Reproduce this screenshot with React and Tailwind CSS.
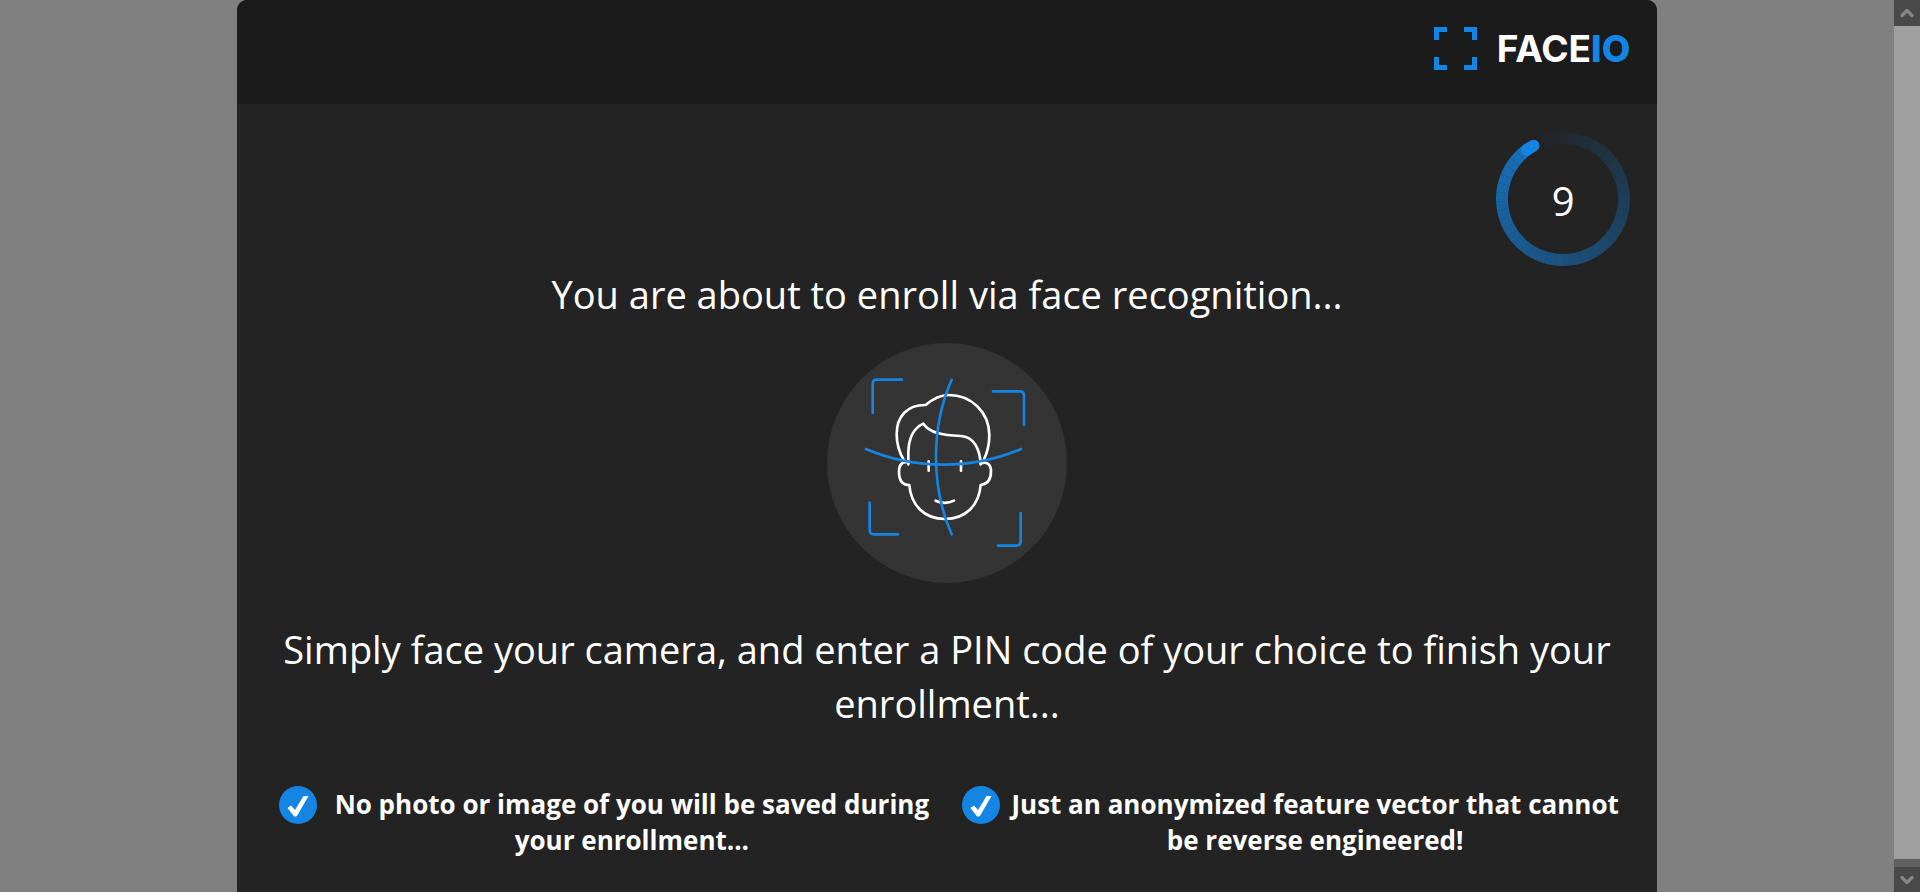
import React from "react";
import { ChevronUp, ChevronDown } from "lucide-react";

const SEGMENTS = 44;
const SWEEP = 352;
const START = -28;

const point = (angle, r = 61) => {
  const rad = ((angle - 90) * Math.PI) / 180;
  return `${(67 + r * Math.cos(rad)).toFixed(2)} ${(67 + r * Math.sin(rad)).toFixed(2)}`;
};

const arc = (from, to) => `M${point(from)} A61 61 0 0 1 ${point(to)}`;

const notes = [
  "No photo or image of you will be saved during your enrollment...",
  "Just an anonymized feature vector that cannot be reverse engineered!",
];

function Logo() {
  return (
    <a href="#" className="flex items-center gap-5">
      <svg className="h-[43px] w-[43px]" viewBox="0 0 43 43" fill="none" stroke="#1485e3" strokeWidth="5">
        <path d="M13 2.500H2.500V13M30 2.500H40.500V13M2.500 30V40.500H13M40.500 30V40.500H30" />
      </svg>
      <span className="font-['Inter'] text-[37px] leading-[43px] font-bold text-white">
        FACE<span className="font-extrabold text-[#1485e3]">IO</span>
      </span>
    </a>
  );
}

function Countdown({ value }) {
  const step = SWEEP / SEGMENTS;

  return (
    <div className="relative flex h-[134px] w-[134px] items-center justify-center">
      <svg className="absolute inset-0" viewBox="0 0 134 134" fill="none" stroke="#1485e3" strokeWidth="12">
        {Array.from({ length: SEGMENTS }, (_, i) => (
          <path
            key={i}
            d={arc(START + i * step, START + (i + 1) * step)}
            strokeOpacity={(0.8 * (i + 0.5)) / SEGMENTS}
          />
        ))}
        <path d={arc(-36, -29)} strokeLinecap="round" />
      </svg>
      <span className="relative pt-1 text-[40px] leading-[54px]">{value}</span>
    </div>
  );
}

function FaceScan() {
  return (
    <svg
      className="h-60 w-60"
      viewBox="21 24 720 720"
      fill="none"
      strokeWidth="8"
      strokeLinecap="round"
      strokeLinejoin="round"
    >
      <circle cx="381" cy="384" r="360" fill="#343434" />
      <g stroke="#ffffff">
        <path d="M252 376C236 350 230 322 230 298C230 244 262 209 317 210C338 192 362 180 386 180C454 180 508 232 508 301C508 330 501 356 490 378" />
        <path d="M265 388V352C266 308 280 280 310 266C330 294 366 301 422 303C462 305 480 342 482 388" />
        <path d="M265 382C246 378 237 390 237 410C237 436 248 450 268 450C273 510 312 552 375 552C438 552 477 510 482 450C503 448 513 436 513 409C513 388 500 378 482 386" />
        <path d="M326 379V407M423 379V407" />
        <path d="M347 497Q375 510 402 497" />
      </g>
      <g stroke="#1485e3">
        <path d="M158 234V147Q158 134 171 134H246" />
        <path d="M519 169H600Q612 169 612 182V270" />
        <path d="M149 503V585Q149 598 162 598H234" />
        <path d="M602 534V619Q602 632 590 632H534" />
        <path d="M138 342Q248 389 370 389Q492 389 603 342" />
        <path d="M395 134Q348 240 348 366Q348 492 395 598" />
      </g>
    </svg>
  );
}

function Note({ text }) {
  return (
    <li className="flex flex-1 items-start pl-[15px]">
      <svg className="h-[38px] w-[38px] shrink-0" viewBox="0 0 38 38">
        <circle cx="19" cy="19" r="19" fill="#1485e3" />
        <path d="M8.500 22L12 19.500L16 24L24.500 10H29.500L18.500 29C17.500 31 15 31.200 14 29Z" fill="#ffffff" />
      </svg>
      <p className="flex-1 px-2 text-center text-[26px] leading-9 font-bold">{text}</p>
    </li>
  );
}

function Scrollbar() {
  return (
    <div className="flex w-[26px] shrink-0 flex-col bg-[#606060]">
      <button aria-label="Scroll up" className="flex h-[26px] items-center justify-center bg-[#494949] text-[#868686]">
        <ChevronUp size={20} strokeWidth={4} />
      </button>
      <div className="mb-2 flex-1 bg-[#9f9f9f]" />
      <button aria-label="Scroll down" className="flex h-[25px] items-center justify-center bg-[#494949] text-[#868686]">
        <ChevronDown size={20} strokeWidth={4} />
      </button>
    </div>
  );
}

export default function App() {
  return (
    <div className="flex h-screen overflow-hidden bg-[#808080] font-['Segoe_UI','Open_Sans',sans-serif] text-white">
      <div className="flex flex-1 justify-center">
        <main className="flex w-3/4 flex-col overflow-hidden rounded-t-[10px] bg-[#232323]">
          <header className="flex h-[104px] shrink-0 items-start justify-end bg-[#1b1b1b] px-[27px] pt-[27px]">
            <Logo />
          </header>
          <section className="flex flex-col items-center px-[27px] pt-7">
            <div className="self-end">
              <Countdown value={9} />
            </div>
            <h1 className="mt-px text-center text-[38px] leading-[54px]">
              You are about to enroll via face recognition...
            </h1>
            <div className="mt-[22px]">
              <FaceScan />
            </div>
            <p className="mt-[39px] text-center text-[38px] leading-[54px]">
              Simply face your camera, and enter a PIN code of your choice to finish your enrollment...
            </p>
            <ul className="mt-14 flex w-full">
              {notes.map((text) => (
                <Note key={text} text={text} />
              ))}
            </ul>
          </section>
        </main>
      </div>
      <Scrollbar />
    </div>
  );
}
